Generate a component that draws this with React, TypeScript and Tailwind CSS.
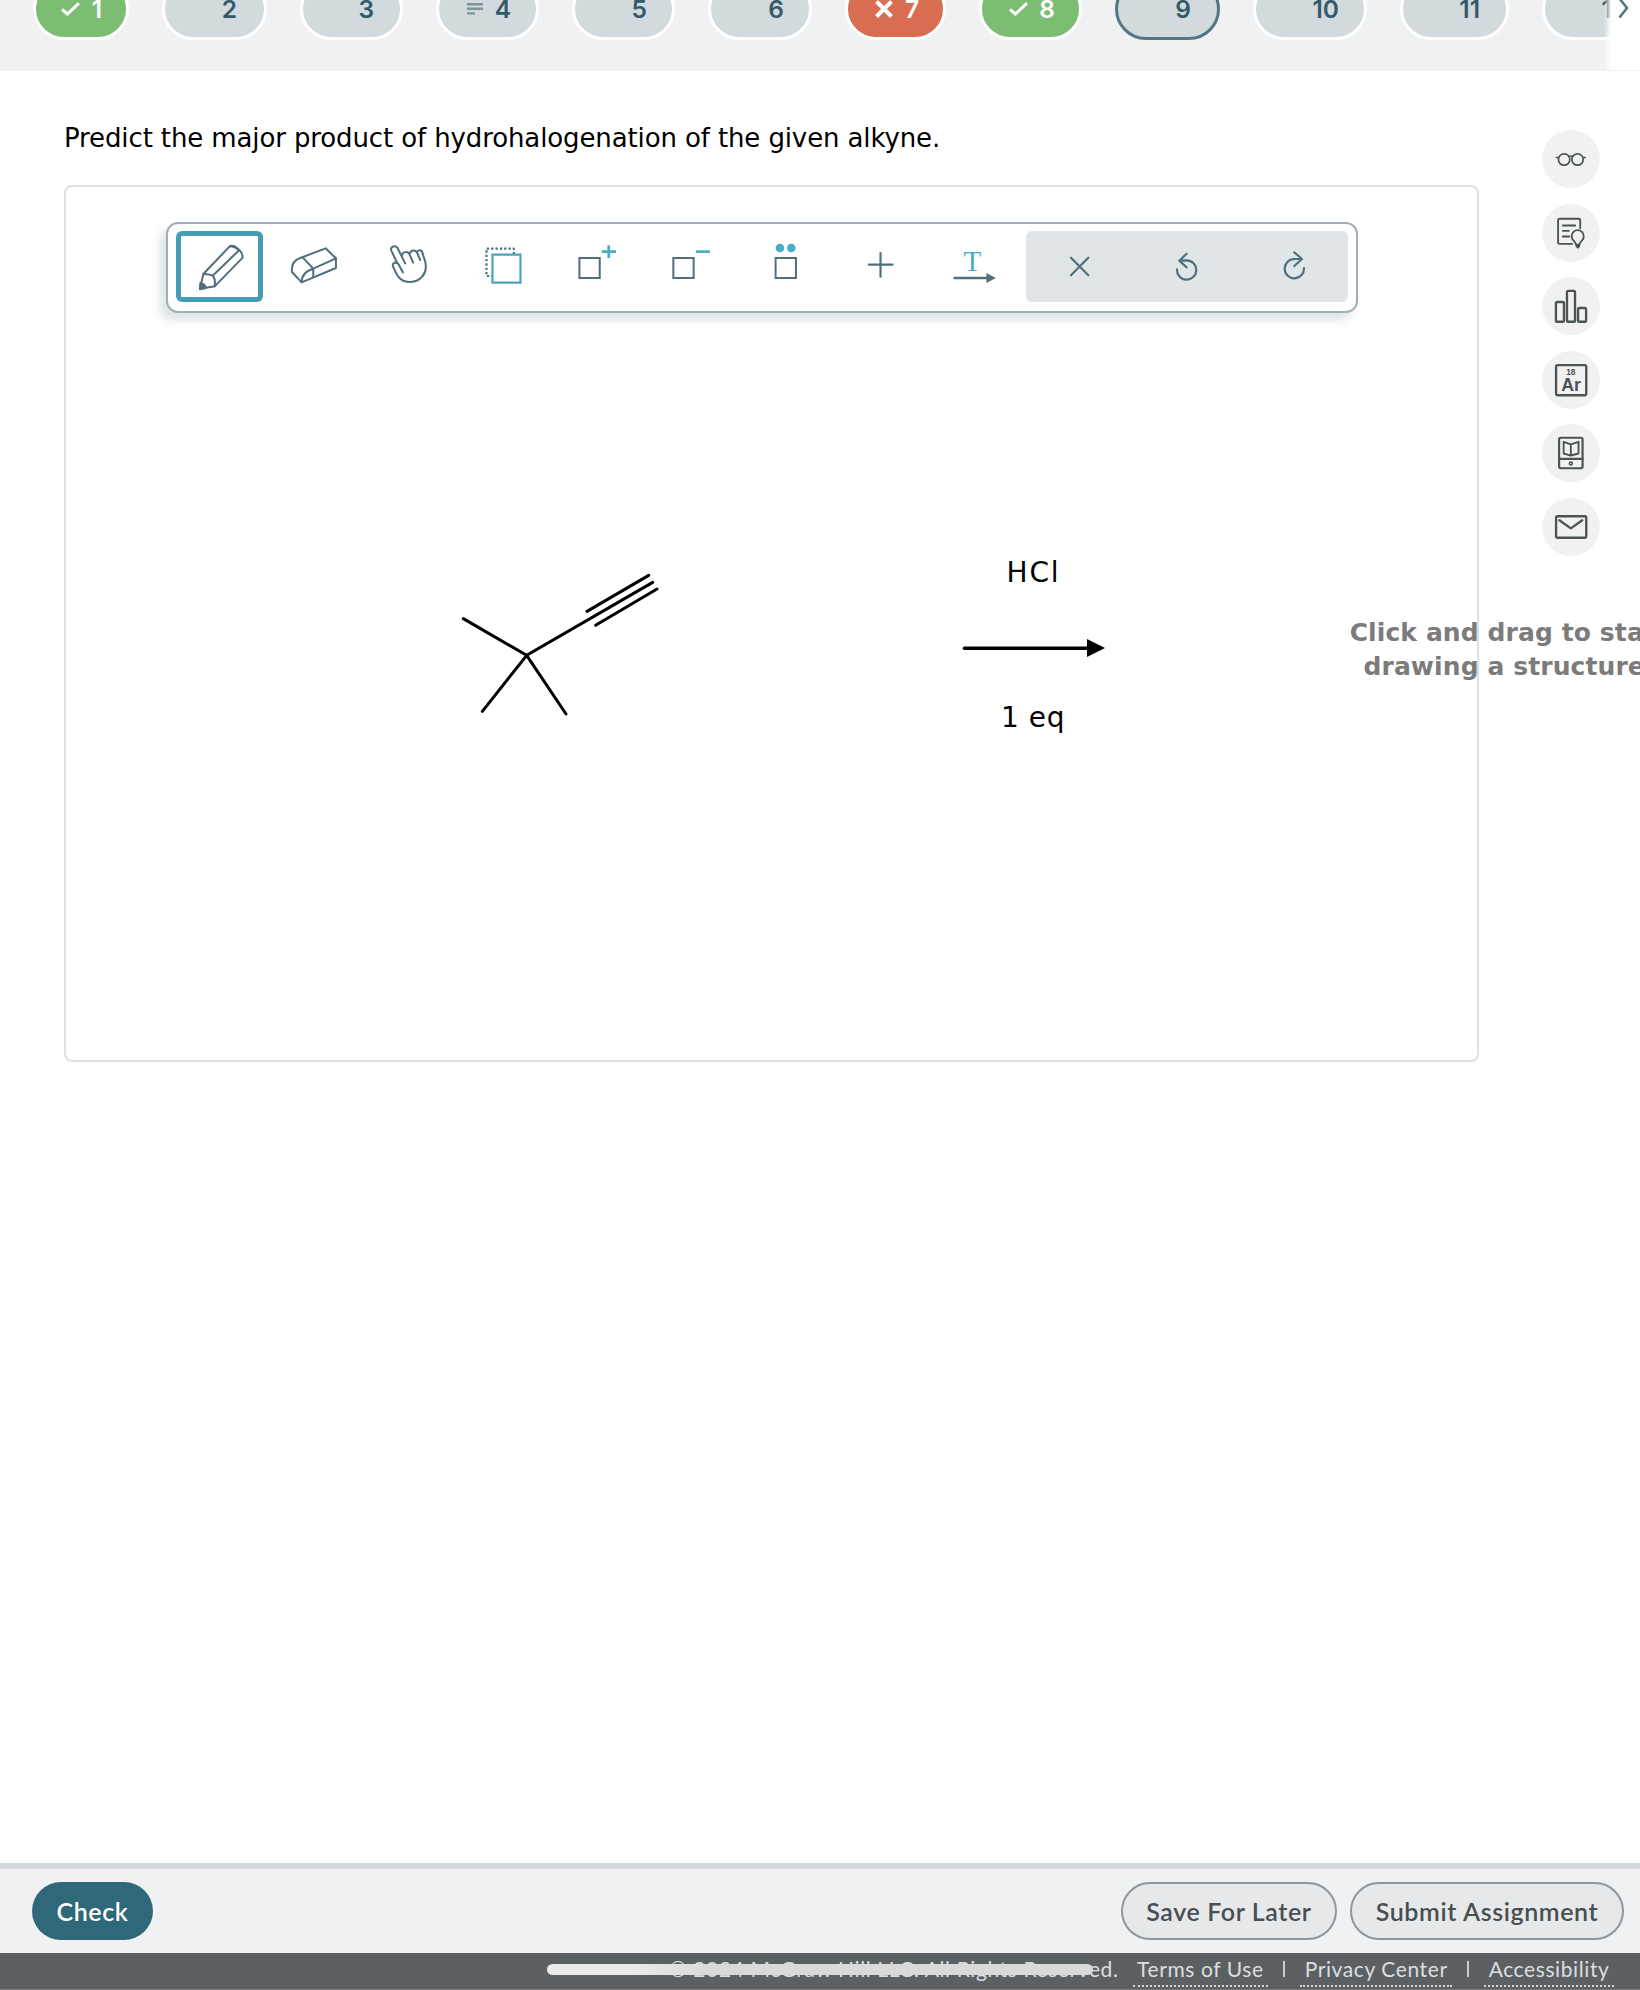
import type { ReactNode } from "react";

const INK = "#4f6f7c";
const TEAL = "#4aacc8";

type PillKind = "plain" | "correct" | "wrong" | "draft" | "current";

const pills: { n: number; kind: PillKind; box: string }[] = [
  { n: 1, kind: "correct", box: "w-[96px] pr-[24px]" },
  { n: 2, kind: "plain", box: "w-[105px] pr-[27px]" },
  { n: 3, kind: "plain", box: "w-[103px] pr-[26px]" },
  { n: 4, kind: "draft", box: "w-[103px] pr-[25px]" },
  { n: 5, kind: "plain", box: "w-[103px] pr-[25px]" },
  { n: 6, kind: "plain", box: "w-[104px] pr-[25px]" },
  { n: 7, kind: "wrong", box: "w-[101px] pr-[24px]" },
  { n: 8, kind: "correct", box: "w-[103px] pr-[24px]" },
  { n: 9, kind: "current", box: "w-[105px] pr-[26px]" },
  { n: 10, kind: "plain", box: "w-[114px] pr-[25px]" },
  { n: 11, kind: "plain", box: "w-[109px] pr-[26px]" },
  { n: 12, kind: "plain", box: "w-[114px] pr-[26px]" },
];

const pillColors: Record<PillKind, string> = {
  plain: "border-white bg-[#d2dadd] text-[#34596a]",
  draft: "border-white bg-[#d2dadd] text-[#34596a]",
  correct: "border-white bg-[#7dbd73] text-white",
  wrong: "border-white bg-[#d96d52] text-white",
  current: "border-[#527682] bg-[#d2dadd] text-[#34596a]",
};

function PillIcon({ kind }: { kind: PillKind }) {
  if (kind === "correct")
    return (
      <svg width="19" height="14" viewBox="0 0 19 14" fill="none" stroke="currentColor" strokeWidth="3">
        <path d="M1 7.5 6.5 12 18 1.2" />
      </svg>
    );
  if (kind === "wrong")
    return (
      <svg width="18" height="18" viewBox="0 0 18 18" fill="none" stroke="currentColor" strokeWidth="4">
        <path d="M1.5 1.5 16.5 16.5M16.5 1.5 1.5 16.5" />
      </svg>
    );
  if (kind === "draft")
    return (
      <svg width="16" height="12" viewBox="0 0 16 12" fill="none" stroke="#7d97a2" strokeWidth="2.4">
        <path d="M0 1.2H16M0 5.8H16M0 10.4H8" />
      </svg>
    );
  return null;
}

function QuestionNav() {
  return (
    <nav className="relative h-[71px] shrink-0 overflow-hidden bg-[#f0f1f3]">
      <ol className="-mt-[22px] flex gap-[33px] pl-[33px]">
        {pills.map((p) => (
          <li
            key={p.n}
            className={`flex h-[62px] shrink-0 items-center justify-end gap-[11.5px] rounded-full border-[3px] font-['Inter'] text-[24.5px] leading-none font-semibold ${p.box} ${pillColors[p.kind]}`}
          >
            <PillIcon kind={p.kind} />
            <span>{p.n}</span>
          </li>
        ))}
      </ol>
      <div className="absolute top-0 right-0 flex h-[70px] w-9 bg-linear-to-r from-white/0 to-white to-20% pl-[14px]">
        <svg className="-mt-[3px]" width="12" height="22" viewBox="0 0 12 22" fill="none" stroke="#527682" strokeWidth="2.6">
          <path d="M1.5 1.5 9 11 1.5 20.5" />
        </svg>
      </div>
    </nav>
  );
}

const tools: { name: string; view: string; art: ReactNode }[] = [
  {
    name: "Draw",
    view: "78 63 261 213",
    art: (
      <g strokeWidth="6">
        <path d="M160 192 239 109Q246 105 257 111 278 124 278 143L194 229 150 236Z" />
        <path d="M160 192Q183 192 190 199 197 209 194 229M188 197 266 122M240 109Q262 112 266 122" />
        <path d="M151 219Q164 221 168 234L150 238Z" fill={INK} />
      </g>
    ),
  },
  {
    name: "Erase",
    view: "361.2 63 261 213",
    art: (
      <g strokeWidth="6">
        <path d="M528 115 559 145V174L456 217 427 186Q424 153 452 144Z" />
        <path d="M459 142 491 176 559 145M491 176V201M491 176Q456 186 456 217" />
      </g>
    ),
  },
  {
    name: "Grab",
    view: "644.4 63 261 213",
    art: (
      <g strokeWidth="6">
        <path d="M741 159 723 121C719 110 736 104 742 114L765 160" />
        <path d="M755 137C756 125 773 122 778 133L789 158M778 133C780 119 796 118 801 129L810 150M800 127C804 118 816 119 817 130L825 155C834 190 810 216 780 216 745 216 738 190 728 168 726 158 738 154 745 163L758 187" />
      </g>
    ),
  },
  {
    name: "Select",
    view: "927.6 63 261 213",
    art: (
      <g strokeWidth="6.5">
        <path d="M1092 133V116H1010V198H1027" strokeDasharray="7 6" strokeLinecap="butt" />
        <path d="M1028 134H1112V218H1028Z" stroke="#48a3bb" strokeLinejoin="miter" fill="#fff" />
      </g>
    ),
  },
  {
    name: "Positive charge",
    view: "10.8 63 261 213",
    art: (
      <g strokeWidth="6" strokeLinecap="butt" strokeLinejoin="miter">
        <path d="M87 144H148V204H87Z" />
        <path d="M175 106V144M154 125H197" stroke={TEAL} strokeWidth="8" />
      </g>
    ),
  },
  {
    name: "Negative charge",
    view: "294 63 261 213",
    art: (
      <g strokeWidth="6" strokeLinecap="butt" strokeLinejoin="miter">
        <path d="M370 144H431V204H370Z" />
        <path d="M438 125H480" stroke={TEAL} strokeWidth="8" />
      </g>
    ),
  },
  {
    name: "Lone pair",
    view: "577.2 63 261 213",
    art: (
      <g strokeWidth="6" strokeLinejoin="miter">
        <path d="M678 144H739V204H678Z" />
        <circle cx="691" cy="114" r="13" fill={TEAL} stroke="none" />
        <circle cx="725" cy="114" r="13" fill={TEAL} stroke="none" />
      </g>
    ),
  },
  {
    name: "Plus",
    view: "860.4 63 261 213",
    art: <path d="M991 129V200M956 164H1027" strokeWidth="6.5" />,
  },
  {
    name: "Reaction arrow",
    view: "1143.6 63 261 213",
    art: (
      <g>
        <text x="1268" y="184" fontSize="87" textAnchor="middle" fill={TEAL} stroke="none" fontFamily="'Liberation Serif', serif">
          T
        </text>
        <path d="M1214 204H1312" strokeWidth="7" />
        <path d="M1310 189 1338 204 1310 219Z" fill={INK} stroke="none" />
      </g>
    ),
  },
];

const actions: { name: string; view: string; d: string }[] = [
  { name: "Clear", view: "258 63 322 213", d: "M393 143 445 196M445 143 393 196" },
  { name: "Undo", view: "580 63 322 213", d: "M712 178A29 29 0 1 0 741 151L719 152M741 131 719 152 741 172" },
  { name: "Redo", view: "902 63 322 213", d: "M1091 174A29 29 0 1 1 1062 147H1085M1062 127 1085 147 1062 168" },
];

function Toolbar() {
  return (
    <div className="mt-[35px] ml-[100px] flex h-[91px] w-[1192px] items-start rounded-[12px] border-2 border-[#9db0b8] bg-white pt-[7px] pl-[8px] shadow-[-6px_7px_10px_rgba(120,145,155,0.25)]">
      <div className="flex gap-[7.4px]">
        {tools.map((t, i) => (
          <button
            key={t.name}
            aria-label={t.name}
            className={`h-[71px] w-[87px] rounded-[6px] ${i === 0 ? "shadow-[inset_0_0_0_5px_#479cb5]" : ""}`}
          >
            <svg width="87" height="71" viewBox={t.view} fill="none" stroke={INK} strokeLinecap="round" strokeLinejoin="round">
              {t.art}
            </svg>
          </button>
        ))}
      </div>
      <div className="ml-[8px] flex rounded-[6px] bg-[#e0e5e7]">
        {actions.map((a) => (
          <button key={a.name} aria-label={a.name} className="h-[71px] w-[107.3px]">
            <svg width="107.3" height="71" viewBox={a.view} fill="none" stroke={INK} strokeWidth="6.5" strokeLinecap="round" strokeLinejoin="round">
              <path d={a.d} />
            </svg>
          </button>
        ))}
      </div>
    </div>
  );
}

function Canvas() {
  return (
    <div className="relative mt-[28px] ml-16 h-[877px] w-[1415px] rounded-[8px] border-2 border-[#dce1e4] font-['DejaVu_Sans'] text-black">
      <Toolbar />
      <svg className="absolute top-[363px] left-[374px]" width="240" height="180" viewBox="0 0 720 540" stroke="#000" strokeWidth="9" fill="none">
        <path d="M70 206 260 316 638 97M260 316 127 484M260 316 378 492M441 184 626 76M467 226 651 117" strokeLinecap="round" />
      </svg>
      <div className="absolute top-[368px] left-[895px] flex w-[144px] flex-col items-center text-[28px] leading-[34px] tracking-[0.6px]">
        <span className="mt-px pl-[1px] tracking-[1.8px]">HCl</span>
        <svg className="mt-[48px]" width="144" height="20" viewBox="0 0 144 20">
          <path d="M3.5 10.2H128" stroke="#000" strokeWidth="3.6" strokeLinecap="round" />
          <path d="M126 1 144 10 126 19Z" />
        </svg>
        <span className="mt-[43px]">1 eq</span>
      </div>
      <p className="absolute top-[429px] left-[1273px] w-[340px] text-center text-[25px] leading-[34px] font-bold tracking-[0.1px] whitespace-nowrap text-[#7b7b7b]">
        Click and drag to start
        <br />
        drawing a structure.
      </p>
    </div>
  );
}

const helpers: { name: string; view: string; art: ReactNode }[] = [
  {
    name: "Read aloud",
    view: "126 30 173 173",
    art: (
      <g strokeWidth="5">
        <circle cx="192" cy="118" r="17" />
        <circle cx="232" cy="118" r="17" />
        <path d="M206 109Q212 106 218 109M169 112H176M248 112H255" />
      </g>
    ),
  },
  {
    name: "Hint",
    view: "126 251 173 173",
    art: (
      <g strokeWidth="5.5">
        <path d="M240 323V299Q240 295 236 295H178Q174 295 174 299V366Q174 370 178 370H216" />
        <path d="M188 315H225M188 331H206M188 348H207" />
        <path d="M227 371Q226 366 219 359A18 18 0 1 1 246 359Q239 366 238 371" />
        <path d="M228 372H237V377L233 381 229 377Z" fill="#4b5355" />
      </g>
    ),
  },
  {
    name: "Data tables",
    view: "126 471.5 173 173",
    art: (
      <g strokeWidth="7">
        <rect x="167.5" y="546" width="24" height="59" rx="4" />
        <rect x="200.5" y="513" width="24" height="92" rx="4" />
        <rect x="233.5" y="564" width="24" height="41" rx="4" />
      </g>
    ),
  },
  {
    name: "Periodic table",
    view: "126 692 173 173",
    art: (
      <g strokeWidth="7">
        <rect x="168" y="734" width="90" height="90" rx="5" />
        <g fill="#4b5355" stroke="none" fontFamily="'Liberation Sans', sans-serif" fontWeight="700" textAnchor="middle">
          <text x="212" y="765" fontSize="25">18</text>
          <text x="213" y="811" fontSize="53">Ar</text>
        </g>
      </g>
    ),
  },
  {
    name: "eBook",
    view: "126 913 173 173",
    art: (
      <g strokeWidth="6.5">
        <rect x="177" y="954" width="70" height="91" rx="5" />
        <path d="M177 1017H247" />
        <circle cx="212" cy="1031" r="4.5" strokeWidth="4.5" />
        <path d="M190.500 966 212 974 235 966V1001L212 1007 190.500 1001ZM212 974V1007" strokeWidth="5.5" />
      </g>
    ),
  },
  {
    name: "Message",
    view: "126 1133.5 173 173",
    art: (
      <g strokeWidth="7">
        <rect x="168" y="1188" width="90" height="64" rx="5" />
        <path d="M178 1200 212 1224 246 1200" />
      </g>
    ),
  },
];

function HelperRail() {
  return (
    <aside className="flex w-[98px] flex-col gap-[15.6px] pt-[59px]">
      {helpers.map((h) => (
        <button key={h.name} aria-label={h.name} className="size-[58px] rounded-full bg-[#f1f1f1]">
          <svg width="58" height="58" viewBox={h.view} fill="none" stroke="#4b5355" strokeLinecap="round" strokeLinejoin="round">
            {h.art}
          </svg>
        </button>
      ))}
    </aside>
  );
}

function ActionBar() {
  const outline =
    "h-[58px] rounded-full border-2 border-[#8d989a] bg-[#e7e8ea] text-center text-[#474f51]";
  return (
    <div className="flex h-[90px] shrink-0 items-start border-t-[6px] border-[#d2dadd] bg-[#f0f1f3] px-4 pt-[13px] pl-8 font-['Lato'] text-[25px] leading-none font-semibold tracking-[0.6px]">
      <button className="h-[58px] w-[121px] rounded-full bg-[#2e6879] text-white">Check</button>
      <button className={`${outline} ml-auto w-[216px]`}>Save For Later</button>
      <button className={`${outline} ml-[13px] w-[274px]`}>Submit Assignment</button>
    </div>
  );
}

function Footer() {
  const link = "h-[34px] border-b-2 border-dotted border-[#d3d6d7] px-[4.5px] whitespace-nowrap";
  return (
    <footer className="relative flex h-[37px] shrink-0 justify-end border-b border-[#7a7f81] bg-[#5b6163] pr-[26px] font-['Lato'] text-[21px] leading-[32px] tracking-[0.6px] text-[#dcdfe0]">
      <span className="mr-[14px] whitespace-nowrap">© 2024 McGraw Hill LLC. All Rights Reserved.</span>
      <a className={link}>Terms of Use</a>
      <span className="mx-[15px] mt-2 h-4 w-[2px] bg-[#c9cccd]" />
      <a className={link}>Privacy Center</a>
      <span className="mx-[15px] mt-2 h-4 w-[2px] bg-[#c9cccd]" />
      <a className={link}>Accessibility</a>
      <div className="absolute top-[11px] left-[547px] h-[11px] w-[546px] rounded-full bg-linear-to-r from-[#ebebeb] from-15% to-[#d9d9d9] to-30%" />
    </footer>
  );
}

export default function App() {
  return (
    <div className="flex h-[1990px] w-[1640px] flex-col overflow-hidden bg-white">
      <QuestionNav />
      <div className="flex flex-1">
        <main className="w-[1542px]">
          <h1 className="mt-[48px] ml-[64px] font-['DejaVu_Sans'] text-[26px] leading-[38px] tracking-[-0.12px] whitespace-nowrap text-black">
            Predict the major product of hydrohalogenation of the given alkyne.
          </h1>
          <Canvas />
        </main>
        <HelperRail />
      </div>
      <ActionBar />
      <Footer />
    </div>
  );
}
